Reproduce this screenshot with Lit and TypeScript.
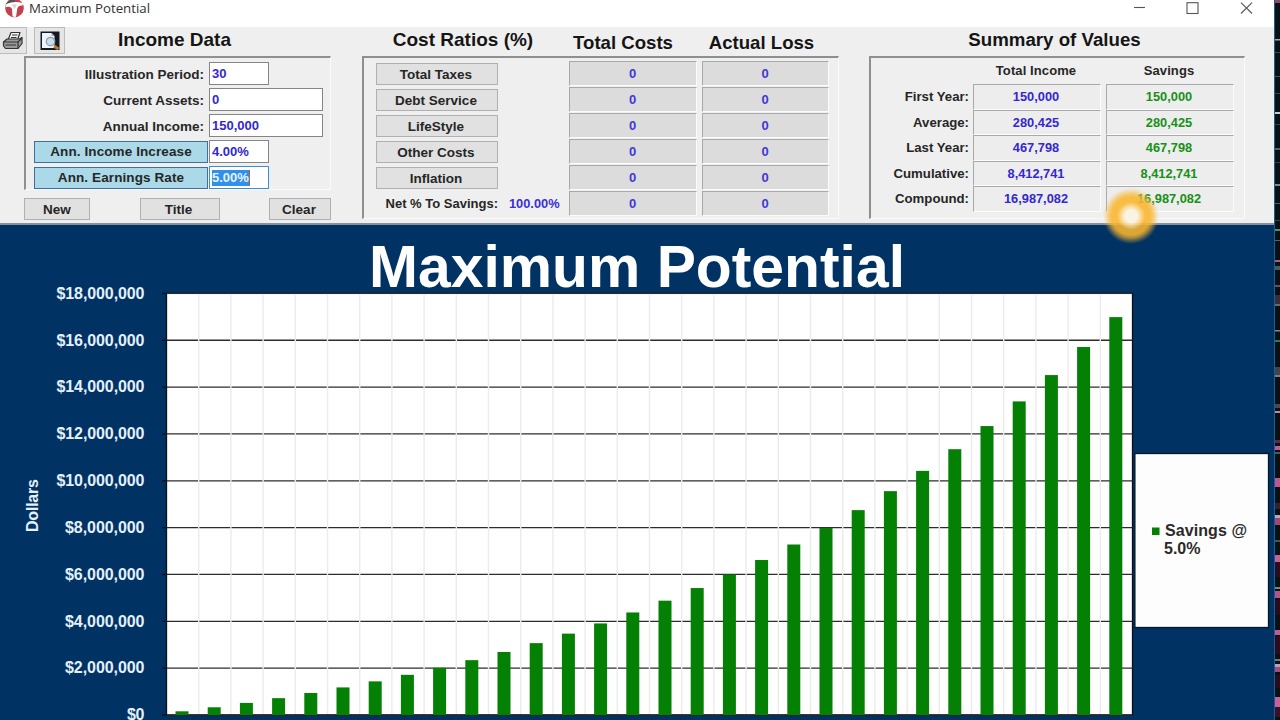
import { LitElement, html, svg, css } from 'lit';
import { customElement, property } from 'lit/decorators.js';
import { classMap } from 'lit/directives/class-map.js';

const YEARS = 30;
const AXIS_MAX = 18000000;
const AXIS_STEP = 2000000;

// Compound value at the end of every year, income is added before the interest
function savingsByYear(income: number, increase: number, rate: number): number[] {
  const values: number[] = [];
  let total = 0;
  for (let year = 0; year < YEARS; year++) {
    total = (total + income * Math.pow(1 + increase, year)) * (1 + rate);
    values.push(total);
  }
  return values;
}

@customElement('savings-chart')
class SavingsChart extends LitElement {
  static styles = css`
    :host {
      display: block;
      height: 495px;
      background: #003263;
    }

    svg {
      display: block;
    }

    text {
      font-family: 'Liberation Sans', Arial, sans-serif;
      font-weight: bold;
      font-size: 16px;
      fill: #e4f0fa;
    }

    .title {
      font-size: 59.5px;
      fill: #fff;
    }

    .plot {
      fill: #fff;
      stroke: #0a0f18;
      stroke-width: 1.3;
    }

    .row {
      stroke: #2c2c2c;
      stroke-width: 1.3;
    }

    .tick {
      stroke: #04101f;
      stroke-width: 1.3;
    }

    .column {
      stroke: #ebebeb;
      stroke-width: 1.4;
    }

    .bar,
    .marker {
      fill: #048004;
    }

    .legend {
      fill: #fdfdfd;
      stroke: #06162b;
      stroke-width: 1.3;
    }

    .legend-text {
      fill: #2a2a2a;
    }
  `;

  @property({ type: Array }) values: number[] = [];

  private left = 166.5;
  private right = 1132.5;
  private top = 68.4;
  private bottom = 490;

  private y(value: number) {
    return this.bottom - (value / AXIS_MAX) * (this.bottom - this.top);
  }

  private renderRow(value: number) {
    const y = this.y(value);
    const label = '$' + value.toLocaleString('en-US');
    // 88px for the widest label, one digit less is 9px narrower
    const width = label.length === 11 ? 88 : label.length === 10 ? 79.5 : 17.5;
    return svg`
      <line class="tick" x1="162" x2=${this.left} y1=${y} y2=${y}></line>
      <line class="row" x1=${this.left} x2=${this.right} y1=${y} y2=${y}></line>
      <text x=${144.5 - width} y=${y + 5.3} textLength=${width}>${label}</text>
    `;
  }

  render() {
    const step = (this.right - this.left) / YEARS;
    const rows = Array.from({ length: AXIS_MAX / AXIS_STEP + 1 }, (_, i) => i * AXIS_STEP);
    const columns = Array.from({ length: YEARS - 1 }, (_, i) => this.left + step * (i + 1));

    return html`
      <svg width="1274" height="495" viewBox="0 0 1274 495">
        <text class="title" x="369" y="62" textLength="536" lengthAdjust="spacingAndGlyphs">Maximum Potential</text>
        <rect class="plot" x=${this.left} y=${this.top} width=${this.right - this.left} height=${this.bottom - this.top}></rect>
        ${rows.map((value) => this.renderRow(value))}
        ${columns.map((x) => svg`<line class="column" x1=${x} x2=${x} y1=${this.top + 1} y2=${this.bottom - 1}></line>`)}
        ${this.values.map((value, i) => svg`
          <rect class="bar" x=${this.left + step * (i + 0.5) - 7.1} y=${this.y(value)} width="13" height=${this.bottom - this.y(value)}></rect>
        `)}
        <text transform="translate(38 307) rotate(-90)" textLength="53">Dollars</text>
        <rect class="legend" x="1134.9" y="228.5" width="133.6" height="174"></rect>
        <rect class="marker" x="1152" y="302.5" width="7.5" height="7.5"></rect>
        <text class="legend-text" x="1165" y="311" textLength="82">Savings @</text>
        <text class="legend-text" x="1164" y="329" textLength="36.5">5.0%</text>
      </svg>
    `;
  }
}

// Slice of the desktop that stays visible to the right of the window
const STRIPES = [
  [0, 3, '#8e4a62'], [39, 1.5, '#a5a5a5'], [52, 1, '#3d4a48'], [76, 1, '#4a5552'], [93, 1, '#3a4644'],
  [112, 2, '#c4cdca'], [124, 1, '#39403f'], [148, 2, '#56605c'], [162, 1, '#3c3c3c'], [184, 2, '#7d8c85'],
  [203, 1, '#50604c'], [220, 1, '#3b4440'], [229, 2, '#5d8a62'], [240, 1, '#5a5f5d'], [260, 2, '#b0587f'],
  [266, 4, '#4b5a56'], [285, 2, '#6b4d5c'], [295, 9, '#3b2f36'], [304, 2, '#5e6f68'], [330, 1.5, '#8f8091'],
  [340, 2, '#3f7058'], [367, 8, '#454345'], [375, 2, '#7d7d7d'], [404, 4, '#50464b'], [411, 2, '#b78aa0'],
  [440, 3, '#5e2a46'], [446, 4, '#c65a92'], [452, 2, '#466158'], [478, 9, '#c2558e'], [503, 6, '#3b1f2e'],
  [515, 3, '#b9a9b2'], [518, 7, '#a44478'], [540, 2, '#3d5a52'], [555, 7, '#c9609a'], [562, 15, '#2e0c1e'],
  [587, 2, '#79857f'], [591, 7, '#b95089'], [600, 15, '#2c0b1d'], [630, 5, '#c65a92'], [636, 18, '#2e0c1e'],
  [659, 2, '#7a7380'], [664, 3, '#b5a5b0'], [667, 5, '#a84a7d'], [675, 13, '#2b0b1c'], [697, 10, '#c9609a'],
  [707, 10, '#3a1127'],
] as const;

@customElement('app-root')
class AppRoot extends LitElement {
  static styles = css`
    :host {
      display: flex;
      position: relative;
      width: 1280px;
      height: 720px;
      overflow: hidden;
      background: #0b1010;
      font: bold 13px 'Liberation Sans', Arial, sans-serif;
      color: #262626;
    }

    * {
      box-sizing: border-box;
    }

    svg {
      display: block;
    }

    .window {
      width: 1275.5px;
      border-right: 1.5px solid #14609a;
    }

    .title-bar {
      display: flex;
      height: 27px;
      background: #fff;
      font: 13.3px 'Open Sans', 'Noto Sans', sans-serif;
      color: #333;
    }

    .title-bar .name {
      flex: 1;
      padding-left: 5px;
      line-height: 17px;
    }

    .app-icon {
      margin-left: 4px;
    }

    .panel {
      display: flex;
      height: 198px;
      background: #efefef;
      border-bottom: 2px solid #84919d;
    }

    .income {
      width: 331px;
    }

    .costs {
      width: 477px;
      margin-left: 31px;
    }

    .summary {
      width: 376px;
      margin-left: 30px;
    }

    .head {
      display: flex;
      height: 29px;
    }

    h2 {
      margin: 0;
      font-size: 19px;
      line-height: 26px;
      text-align: center;
      white-space: nowrap;
      color: #151515;
    }

    .income h2 {
      width: 219px;
    }

    .costs h2 {
      width: 202px;
    }

    .costs h2.sub {
      width: 118px;
      font-size: 18.6px;
      line-height: 32px;
    }

    .costs h2.loss {
      width: 127px;
      margin-left: 16px;
    }

    .summary h2 {
      width: 371px;
      font-size: 18.7px;
    }

    .tool {
      display: flex;
      align-items: center;
      justify-content: center;
      height: 27px;
      background: #e5e5e5;
      border: 1px solid #bcbcbc;
    }

    .tool.print {
      width: 27px;
      border-left: 0;
    }

    .tool.preview {
      width: 31px;
      margin-left: 7px;
    }

    .group {
      border: 1px solid #fafafa;
      border-left: 2px solid #8f8f8f;
      border-top: 2px solid #8f8f8f;
    }

    .income .group {
      display: flex;
      flex-direction: column;
      gap: 3px;
      height: 134px;
      margin-left: 24px;
      padding: 4px 0 0 8px;
    }

    .line {
      display: flex;
      flex: none;
      align-items: center;
      height: 23px;
    }

    .line label {
      width: 174px;
      padding: 1px 4px 0 0;
      text-align: right;
      font-size: 13.5px;
    }

    .button {
      display: flex;
      align-items: center;
      justify-content: center;
      height: 22px;
      background: #e1e1e1;
      border: 1px solid #b0b0b0;
      font-size: 13.5px;
      white-space: nowrap;
    }

    .button.blue {
      width: 174px;
      background: #abd9e8;
      border: 1.5px solid #3d6f9f;
      letter-spacing: 0.1px;
    }

    .field {
      width: 114px;
      height: 23px;
      margin-left: 1px;
      padding-left: 2px;
      background: #fff;
      border: 1px solid #858585;
      line-height: 21px;
      color: #3328cf;
    }

    .field.short {
      width: 60px;
    }

    .field.focus {
      border-color: #3a8fd0;
    }

    .field.focus span {
      display: inline-block;
      height: 16px;
      line-height: 16px;
      background: #3290ec;
      border-right: 1px solid #9b6a3c;
      color: #e4f4ff;
    }

    .actions {
      display: flex;
      justify-content: space-between;
      margin: 8px 0 0 24px;
    }

    .actions .button:nth-child(1) {
      width: 66px;
    }

    .actions .button:nth-child(2) {
      width: 80px;
      padding-right: 2px;
    }

    .actions .button:nth-child(3) {
      width: 62px;
      padding-right: 2px;
    }

    .costs .group {
      display: grid;
      grid-template-columns: 122px 71px 128px 127px;
      grid-auto-rows: 25px;
      row-gap: 1px;
      column-gap: 0;
      height: 163px;
      padding: 3px 0 0 12px;
    }

    .costs .button {
      margin-top: 2px;
      padding-right: 2px;
    }

    .costs .cell:nth-child(4n) {
      margin-left: 5px;
      margin-right: -5px;
    }

    .net {
      padding-top: 5px;
      justify-self: end;
      white-space: nowrap;
    }

    .percent {
      padding: 5px 0 0 11px;
      font-size: 12.8px;
      color: #3a2fd8;
    }

    .cell {
      height: 25px;
      border: 1px solid #fcfcfc;
      border-left: 1.5px solid #a9a9a9;
      border-top: 1.5px solid #a9a9a9;
      background: #dcdcdc;
      line-height: 24px;
      text-align: center;
      padding-right: 1px;
      color: #4038d8;
    }

    .summary .group {
      display: grid;
      grid-template-columns: 102px 128px 128px;
      grid-template-rows: 23px;
      grid-auto-rows: 25.6px;
      column-gap: 0;
      height: 163px;
      padding-top: 3px;
      padding-left: 0;
    }

    .summary .group > * {
      text-align: center;
    }

    .summary .caption {
      padding: 2px 2px 0 0;
      letter-spacing: 0.1px;
    }

    .summary .group .label {
      padding: 5px 4px 0 0;
      text-align: right;
      font-size: 13.2px;
    }

    .summary .cell {
      height: 25.6px;
      padding-right: 2px;
      background: #ededed;
      line-height: 24px;
      font-size: 12.8px;
      color: #3328cf;
    }

    .summary .savings {
      margin-left: 5px;
      margin-right: -5px;
    }

    .summary .cell.savings {
      color: #189018;
    }

    .pointer {
      position: absolute;
      left: 1102px;
      top: 187px;
      width: 58px;
      height: 58px;
      border-radius: 50%;
      background: radial-gradient(
        circle,
        rgba(250, 244, 230, 0.97) 0 6px,
        rgba(251, 215, 140, 0.92) 10px,
        rgba(250, 182, 45, 0.88) 14px 19px,
        rgba(250, 182, 45, 0.65) 22px,
        rgba(250, 182, 45, 0.2) 26px,
        rgba(250, 182, 45, 0) 28px
      );
    }
  `;

  private costNames = ['Total Taxes', 'Debt Service', 'LifeStyle', 'Other Costs', 'Inflation'];

  private summary = [
    ['First Year:', '150,000'],
    ['Average:', '280,425'],
    ['Last Year:', '467,798'],
    ['Cumulative:', '8,412,741'],
    ['Compound:', '16,987,082'],
  ];

  renderTitleBar() {
    return html`
      <div class="title-bar">
        <svg class="app-icon" width="20" height="18" viewBox="0 0 20 18">
          <circle cx="10.5" cy="8" r="9.3" fill="#c5404a"></circle>
          <path d="M1.2 7A9.3 9.3 0 0 1 10-1.5L11 2 4.5 4.5z" fill="#5a5053"></path>
          <path d="M1.5 4.8C6 1.8 13 1.2 18.8 3.2L18.8 5.5C15.5 5.2 14 6.2 13.3 8.500L12 17 8.500 16.500 8 9C7 6.800 5 6 1.300 7.200z" fill="#fff"></path>
          <path d="M7.5 4.5L12.8 4.2 10.8 9z" fill="#ddd3d4"></path>
        </svg>
        <span class="name">Maximum Potential</span>
        <svg width="146" height="18" viewBox="0 0 146 18" fill="none" stroke="#555" stroke-width="1.1">
          <path d="M6 7.5H17"></path>
          <rect x="59" y="2.7" width="11" height="10.8"></rect>
          <path d="M113 2.7L124 13.5M124 2.7L113 13.5"></path>
        </svg>
      </div>
    `;
  }

  renderIncome() {
    return html`
      <section class="income">
        <div class="head">
          <div class="tool print">
            <svg width="22" height="20" viewBox="0 0 22 20" stroke="#333" stroke-width="1.2" stroke-linejoin="round">
              <path d="M6 9L9 1.5H18L15.5 9" fill="#f4f4f4"></path>
              <path d="M10 4H15.5M9 6.5H14.5" fill="none"></path>
              <path d="M1.5 11L5 8H17.5L20 6.5V12.5L16 17.5H3.5L1.5 15z" fill="#9a9a9a"></path>
              <path d="M1.5 11H16L20 7M16 11V17.5M3.5 14H14" fill="none"></path>
            </svg>
          </div>
          <div class="tool preview">
            <svg width="20" height="20" viewBox="0 0 20 20">
              <rect x="0.5" y="0.5" width="19" height="18.5" fill="#161a20"></rect>
              <path d="M2 2H11.5L14.5 5V17H2z" fill="#eef4fb"></path>
              <path d="M11.5 2V5H14.5" fill="#9fb0c3"></path>
              <circle cx="10.5" cy="10.5" r="4.2" fill="#c9dcea" stroke="#8fa1b0" stroke-width="1.3"></circle>
              <path d="M14 15L18.5 18" stroke="#b87a2c" stroke-width="3"></path>
            </svg>
          </div>
          <h2>Income Data</h2>
        </div>
        <div class="group">
          <div class="line"><label>Illustration Period:</label><div class="field short">30</div></div>
          <div class="line"><label>Current Assets:</label><div class="field">0</div></div>
          <div class="line"><label>Annual Income:</label><div class="field">150,000</div></div>
          <div class="line"><div class="button blue">Ann. Income Increase</div><div class="field short">4.00%</div></div>
          <div class="line"><div class="button blue">Ann. Earnings Rate</div><div class="field short focus"><span>5.00%</span></div></div>
        </div>
        <div class="actions">
          <div class="button">New</div>
          <div class="button">Title</div>
          <div class="button">Clear</div>
        </div>
      </section>
    `;
  }

  renderCosts() {
    return html`
      <section class="costs">
        <div class="head">
          <h2>Cost Ratios (%)</h2>
          <h2 class="sub">Total Costs</h2>
          <h2 class="sub loss">Actual Loss</h2>
        </div>
        <div class="group">
          ${this.costNames.map((name) => html`
            <div class="button">${name}</div>
            <div></div>
            <div class="cell">0</div>
            <div class="cell">0</div>
          `)}
          <div class="net">Net % To Savings:</div>
          <div class="percent">100.00%</div>
          <div class="cell">0</div>
          <div class="cell">0</div>
        </div>
      </section>
    `;
  }

  renderSummary() {
    return html`
      <section class="summary">
        <div class="head"><h2>Summary of Values</h2></div>
        <div class="group">
          <div></div>
          <div class="caption">Total Income</div>
          <div class="caption savings">Savings</div>
          ${this.summary.map(([label, value]) => html`
            <div class="label">${label}</div>
            ${[false, true].map((savings) => html`<div class=${classMap({ cell: true, savings })}>${value}</div>`)}
          `)}
        </div>
      </section>
    `;
  }

  render() {
    return html`
      <div class="window">
        ${this.renderTitleBar()}
        <div class="panel">
          ${this.renderIncome()}
          ${this.renderCosts()}
          ${this.renderSummary()}
        </div>
        <savings-chart .values=${savingsByYear(150000, 0.04, 0.05)}></savings-chart>
      </div>
      <svg width="5" height="720" viewBox="0 0 5 720">
        ${STRIPES.map(([y, height, color]) => svg`<rect x="0" y=${y} width="5" height=${height} fill=${color}></rect>`)}
      </svg>
      <div class="pointer"></div>
    `;
  }
}
